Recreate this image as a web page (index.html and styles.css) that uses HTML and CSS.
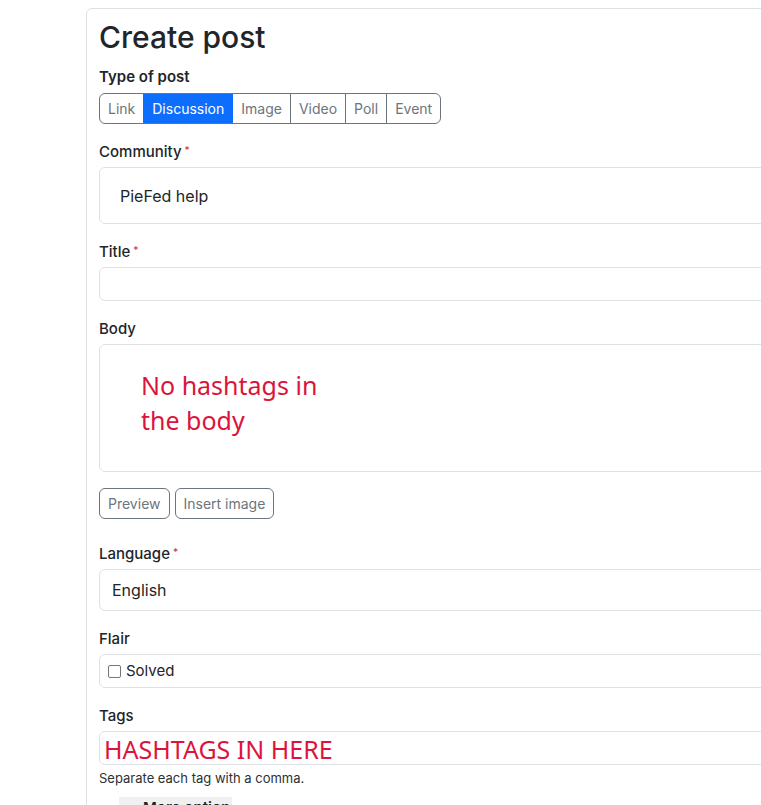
FILE: index.html
```html
<!DOCTYPE html>
<html lang="en">
<head>
<meta charset="utf-8">
<title>Create post</title>
<link rel="stylesheet" href="styles.css">
</head>
<body>
<div class="page">
  <div class="card">
    <h1 class="title">Create post</h1>

    <div class="field">
      <div class="label label-strong">Type of post</div>
      <div class="btn-group">
        <span class="seg">Link</span><span class="seg active">Discussion</span><span class="seg">Image</span><span class="seg">Video</span><span class="seg">Poll</span><span class="seg">Event</span>
      </div>
    </div>

    <div class="field">
      <div class="label">Community<span class="req">*</span></div>
      <div class="control community">PieFed help</div>
    </div>

    <div class="field">
      <div class="label">Title<span class="req">*</span></div>
      <div class="control input-sm"></div>
    </div>

    <div class="field">
      <div class="label">Body</div>
      <div class="control textarea">No hashtags in<br>the body</div>
    </div>

    <div class="btn-row">
      <span class="btn">Preview</span>
      <span class="btn">Insert image</span>
    </div>

    <div class="field">
      <div class="label">Language<span class="req">*</span></div>
      <div class="control select">English</div>
    </div>

    <div class="field">
      <div class="label">Flair</div>
      <div class="control flair"><span class="check"></span><span>Solved</span></div>
    </div>

    <div class="field field-last">
      <div class="label">Tags</div>
      <div class="control tags"><span class="note-tags">HASHTAGS IN HERE</span></div>
      <div class="help">Separate each tag with a comma.</div>
    </div>

    <div class="more"><span class="chev">›</span> More options</div>
  </div>
</div>
</body>
</html>
```

FILE: styles.css
```css
html, body {
  margin: 0;
  padding: 0;
  overflow: hidden;
  background: #fff;
}

body {
  font-family: Inter, "Liberation Sans", sans-serif;
  color: #212529;
  font-size: 16px;
  line-height: 1.5;
}

.page {
  padding: 8px 0 0 86px;
}

.card {
  width: 1000px;
  border: 1px solid #dee2e6;
  border-radius: 6px;
  padding: 10px 12px 0 12px;
  box-sizing: border-box;
  height: 900px;
}

.title {
  margin: 0 0 10px 0;
  font-size: 30px;
  font-weight: 500;
  line-height: 36px;
}

.field {
  margin-bottom: 16px;
}

.field-last {
  margin-bottom: 9px;
}

.label {
  font-size: 15px;
  line-height: 24px;
  height: 24px;
  font-weight: 500;
  margin-bottom: 3px;
}

.label-strong {
  font-weight: 600;
  margin-bottom: 4px;
}

.req {
  color: #dc3545;
  font-size: 10px;
  line-height: 0;
  vertical-align: 3px;
  margin-left: 3px;
}

.btn-group {
  display: flex;
  width: fit-content;
  border: 1px solid #6c757d;
  border-radius: 6px;
  overflow: hidden;
}

.seg {
  font-size: 14px;
  line-height: 21px;
  padding: 4px 8px;
  color: #6c757d;
  border-left: 1px solid #6c757d;
}

.seg:first-child {
  border-left: none;
}

.seg.active {
  background: #0d6efd;
  color: #fff;
  border-left-color: #0d6efd;
}

.seg.active + .seg {
  border-left-color: #0d6efd;
}

.control {
  border: 1px solid #dee2e6;
  border-radius: 6px;
  box-sizing: border-box;
}

.community {
  height: 57px;
  display: flex;
  align-items: center;
  padding-left: 20px;
  padding-top: 1px;
}

.input-sm {
  height: 34px;
}

.textarea {
  height: 128px;
  padding: 23px 0 0 41px;
  font-family: "Noto Sans", "Open Sans", sans-serif;
  font-size: 25px;
  line-height: 35px;
  color: #dc143c;
}

.btn-row {
  display: flex;
  gap: 5px;
  margin-bottom: 23px;
}

.btn {
  font-size: 14px;
  line-height: 21px;
  padding: 4px 8px;
  color: #6c757d;
  border: 1px solid #6c757d;
  border-radius: 6px;
}

.select {
  height: 42px;
  padding: 8px 12px;
  line-height: 24px;
}

.flair {
  height: 34px;
  display: flex;
  align-items: center;
  padding-left: 8px;
  font-size: 15px;
}

.check {
  width: 13px;
  height: 13px;
  border: 1px solid #767676;
  border-radius: 2px;
  box-sizing: border-box;
  margin-right: 5px;
}

.tags {
  height: 34px;
  display: flex;
  align-items: center;
  padding-left: 4px;
}

.note-tags {
  font-family: "Noto Sans", "Open Sans", sans-serif;
  font-size: 25px;
  line-height: 30px;
  color: #dc143c;
  margin-top: 2px;
}

.help {
  font-size: 13px;
  line-height: 20px;
  margin-top: 3px;
  color: #2b3035;
}

.more {
  display: inline-block;
  margin-left: 20px;
  background: #f0f0f0;
  padding: 0 14px;
  font-size: 15px;
  font-weight: 600;
  line-height: 22px;
  width: 113px;
  box-sizing: border-box;
  white-space: nowrap;
  overflow: hidden;
}

.chev {
  font-weight: 600;
}
```
